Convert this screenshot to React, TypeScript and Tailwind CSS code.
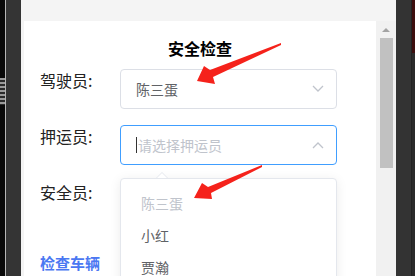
import React from "react";

const cjk = { fontFamily: '"Noto Sans CJK SC", "Noto Sans", sans-serif' };

function Chevron({ up }: { up?: boolean }) {
  return (
    <svg width="12" height="8" viewBox="0 0 12 8" className="shrink-0">
      <path
        d={up ? "M1 7 L6 2 L11 7" : "M1 1 L6 6 L11 1"}
        fill="none"
        stroke="#c0c4cc"
        strokeWidth="1.3"
      />
    </svg>
  );
}

function Row({
  label,
  children,
}: {
  label: string;
  children: React.ReactNode;
}) {
  return (
    <div className="flex items-start">
      <div className="w-[80px] text-[16px] leading-[22px] text-[#222]">{label}</div>
      {children}
    </div>
  );
}

export default function App() {
  const options = [
    { name: "陈三蛋", disabled: true },
    { name: "小红" },
    { name: "贾瀚" },
  ];

  return (
    <div className="relative flex h-[276px] w-[415px] overflow-hidden bg-[#333]" style={cjk}>
      {/* left window edge */}
      <div className="flex w-[5px] flex-col bg-[#080808]">
        <div className="mt-[78px] h-[27px] bg-[repeating-linear-gradient(180deg,#9a9a9a_0px,#9a9a9a_2px,#2a2a2a_2px,#2a2a2a_4px)]" />
      </div>
      <div className="w-px bg-[#b5b5b5]" />
      <div className="w-[15px] bg-[#343434]" />

      {/* page */}
      <div className="flex w-[375px] flex-col bg-[#f4f4f4]">
        <div className="h-[21px]" />
        <div className="flex flex-1 pl-[3px]">
          <div className="relative flex-1 bg-white px-4 pt-[15px]">
            <div className="text-center text-[16px] font-bold leading-6 text-black">安全检查</div>

            <div className="mt-[9px] flex flex-col gap-4">
              <Row label="驾驶员:">
                <div className="flex h-10 w-[217px] items-center justify-between rounded border border-[#dcdfe6] pl-[15px] pr-[12px]">
                  <span className="text-[14px] text-[#606266]">陈三蛋</span>
                  <Chevron />
                </div>
              </Row>
              <Row label="押运员:">
                <div className="flex h-10 w-[217px] items-center justify-between rounded border border-[#409eff] pl-[15px] pr-[12px]">
                  <span className="flex items-center text-[14px] text-[#c0c4cc]">
                    <span className="mr-px h-[16px] w-px bg-[#333]" />
                    请选择押运员
                  </span>
                  <Chevron up />
                </div>
              </Row>
              <Row label="安全员:">
                <div className="h-10 w-[217px] rounded border border-[#dcdfe6]" />
              </Row>
            </div>

            <div className="mt-[31px] text-[15px] font-bold leading-[22px] text-[#4b78f2]">检查车辆</div>

            {/* dropdown */}
            <div className="absolute left-[96px] top-[157px] w-[217px]">
              <div className="absolute left-[36px] top-[-6px] h-0 w-0 border-x-[6px] border-b-[6px] border-x-transparent border-b-[#e4e7ed]" />
              <div className="absolute left-[37px] top-[-5px] h-0 w-0 border-x-[5px] border-b-[5px] border-x-transparent border-b-white" />
              <div className="rounded border border-[#e4e7ed] bg-white pt-2 pb-2 shadow-[0_2px_12px_rgba(0,0,0,0.08)]">
                {options.map((o) => (
                  <div
                    key={o.name}
                    className={
                      "flex h-[32px] items-center pl-5 text-[14px] " +
                      (o.disabled ? "text-[#c0c4cc]" : "text-[#606266]")
                    }
                  >
                    {o.name}
                  </div>
                ))}
              </div>
            </div>
          </div>

          {/* scrollbar */}
          <div className="flex w-[20px] flex-col items-center bg-[#f1f1f1]">
            <div className="mt-[7px] h-0 w-0 border-x-[4px] border-b-[4px] border-x-transparent border-b-[#a3a3a3]" />
            <div className="mt-[6px] h-[130px] w-[13px] bg-[#c1c1c1]" />
          </div>
        </div>
      </div>

      {/* right window edge */}
      <div className="flex flex-1 bg-[#333]">
        <div className="flex-1" />
        <div className="w-px bg-[#222]" />
        <div className="flex w-[3px] flex-col bg-[#2a2a2a]">
          <div className="h-[53px] bg-[#3c0d0d]" />
        </div>
      </div>

      {/* annotation arrows */}
      <svg className="pointer-events-none absolute inset-0" width="415" height="276">
        <polygon points="197,81 204,66 210,70 281,43 281,45 213,77 215,84" fill="#f5221b" />
        <polygon points="194,198 202,183 208,187 262,165 262,167 211,193 212,199" fill="#f5221b" />
      </svg>
    </div>
  );
}
